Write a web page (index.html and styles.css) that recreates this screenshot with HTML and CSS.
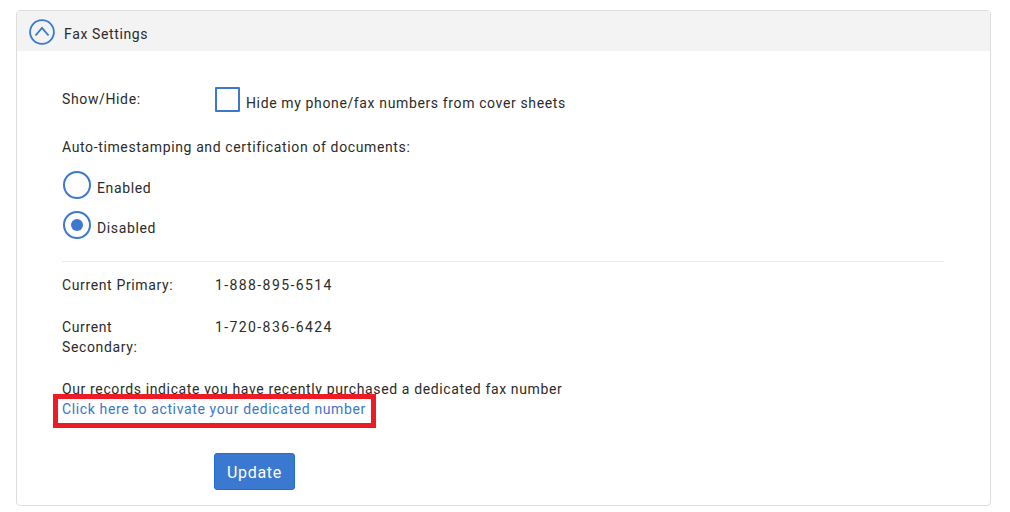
FILE: index.html
```html
<!DOCTYPE html>
<html>
<head>
    <title>Fax Settings</title>
    <link rel="stylesheet" href="styles.css">
</head>
<body>
    <div class="panel">
        <div class="panel-header">
            <svg class="toggle-icon" width="26" height="26" viewBox="0 0 26 26">
                <circle cx="13" cy="13" r="11.9" fill="none" stroke="#3b78d0" stroke-width="1.8"/>
                <path d="M6.5 16.5 L13 9 L19.5 16.5" fill="none" stroke="#3b78d0" stroke-width="1.9"/>
            </svg>
            <span class="panel-title">Fax Settings</span>
        </div>
        <div class="panel-body">
            <div class="show-row">
                <div class="label">Show/Hide:</div>
                <span class="checkbox"></span>
                <span class="checkbox-text">Hide my phone/fax numbers from cover sheets</span>
            </div>
            <div class="timestamp-title">Auto-timestamping and certification of documents:</div>
            <div class="radio-row">
                <span class="radio"></span>
                <span class="radio-text">Enabled</span>
            </div>
            <div class="radio-row">
                <span class="radio radio-on"><span class="radio-dot"></span></span>
                <span class="radio-text">Disabled</span>
            </div>
            <div class="divider"></div>
            <div class="number-row">
                <div class="label">Current Primary:</div>
                <div class="number">1-888-895-6514</div>
            </div>
            <div class="number-row">
                <div class="label">Current Secondary:</div>
                <div class="number">1-720-836-6424</div>
            </div>
            <div class="notice">Our records indicate you have recently purchased a dedicated fax number</div>
            <div class="activate">
                <a class="activate-link" href="#">Click here to activate your dedicated number</a>
                <div class="highlight"></div>
            </div>
            <button class="update-button">Update</button>
        </div>
    </div>
</body>
</html>
```

FILE: styles.css
```css
body {
    margin: 0;
    font-family: Roboto, sans-serif;
    font-size: 14px;
    line-height: 20px;
    letter-spacing: 0.63px;
    color: #2b2b2b;
    background: #fff;
}

.panel {
    margin: 10px 19px 6px 16px;
    border: 1px solid #ddd;
    border-radius: 4px;
    height: 494px;
}

.panel-header {
    display: flex;
    align-items: center;
    height: 40px;
    padding-left: 12px;
    background: #f3f3f3;
}

.toggle-icon {
    margin-top: 1px;
}

.panel-title {
    margin-left: 9px;
    margin-top: 6px;
}

.panel-body {
    padding: 36px 46px 0 45px;
}

.label {
    width: 153px;
    flex-shrink: 0;
}

.show-row {
    display: flex;
    align-items: flex-start;
    height: 43px;
}

.show-row .label {
    margin-top: 2px;
}

.checkbox {
    width: 21px;
    height: 21px;
    border: 2px solid #3b78d0;
    border-radius: 1px;
}

.checkbox-text {
    margin-left: 6px;
    margin-top: 6px;
}

.timestamp-title {
    margin-top: 7px;
    margin-bottom: 14px;
}

.radio-row {
    display: flex;
    align-items: center;
    height: 28px;
    margin-bottom: 12px;
    margin-left: 1px;
}

.radio {
    display: flex;
    align-items: center;
    justify-content: center;
    box-sizing: border-box;
    width: 28px;
    height: 28px;
    border: 2px solid #3b78d0;
    border-radius: 50%;
}

.radio-dot {
    width: 12px;
    height: 12px;
    border-radius: 50%;
    background: #3b78d0;
}

.radio-text {
    margin-left: 6px;
    margin-top: 6px;
}

.divider {
    height: 1px;
    margin-top: 22px;
    background: #e8e8e8;
}

.number-row {
    display: flex;
    margin-top: 13px;
    margin-bottom: 9px;
}

.number-row + .number-row {
    margin-top: 22px;
}

.number-row .label {
    width: 122px;
    margin-right: 31px;
}

.number {
    letter-spacing: 1.4px;
}

.notice {
    margin-top: 22px;
}

.activate {
    position: relative;
}

.activate-link {
    color: #3b78c4;
    text-decoration: none;
}

.highlight {
    position: absolute;
    left: -9px;
    top: -5px;
    width: 323px;
    height: 34px;
    box-sizing: border-box;
    border: 5px solid #ed1c24;
}

.update-button {
    display: block;
    width: 81px;
    height: 37px;
    margin: 34px 0 0 152px;
    padding: 2px 0 0;
    border: 1px solid #1f6fd0;
    border-radius: 3px;
    background: #3b78d0;
    color: #fff;
    font-family: Roboto, sans-serif;
    font-size: 16px;
    letter-spacing: 0.7px;
}
```
